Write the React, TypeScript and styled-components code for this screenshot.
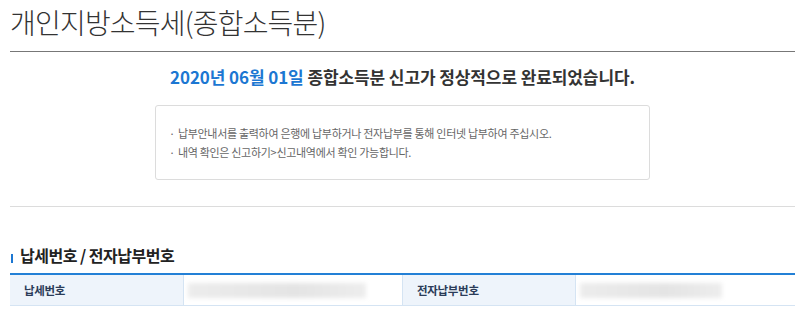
import React from "react";
import styled, { createGlobalStyle } from "styled-components";

const GlobalStyle = createGlobalStyle`
  html, body {
    margin: 0;
    padding: 0;
    background: #fff;
  }
  body {
    font-family: "Noto Sans CJK KR", "Noto Sans", sans-serif;
    color: #333;
  }
`;

const notices = [
  "납부안내서를 출력하여 은행에 납부하거나 전자납부를 통해 인터넷 납부하여 주십시오.",
  "내역 확인은 신고하기>신고내역에서 확인 가능합니다.",
];

const rows = [
  { label: "납세번호", width: 178 },
  { label: "전자납부번호", width: 142 },
];

export default function App() {
  return (
    <>
      <GlobalStyle />
      <Page>
        <PageTitle>개인지방소득세(종합소득분)</PageTitle>
        <Message>
          <Accent>2020년 06월 01일</Accent> 종합소득분 신고가 정상적으로
          완료되었습니다.
        </Message>
        <NoticeBox>
          {notices.map((text, index) => (
            <NoticeItem key={index}>{text}</NoticeItem>
          ))}
        </NoticeBox>
        <Divider />
        <SectionTitle>납세번호 / 전자납부번호</SectionTitle>
        <Table>
          <tbody>
            <tr>
              {rows.map((row) => (
                <React.Fragment key={row.label}>
                  <Th>{row.label}</Th>
                  <Td>
                    <Masked $width={row.width} />
                  </Td>
                </React.Fragment>
              ))}
            </tr>
          </tbody>
        </Table>
      </Page>
    </>
  );
}

const Page = styled.div`
  width: 785px;
  padding: 0 5px 0 10px;
`;

const PageTitle = styled.h1`
  margin: 0;
  height: 51px;
  line-height: 44px;
  font-size: 28px;
  font-weight: 300;
  letter-spacing: -0.8px;
  color: #333;
  border-bottom: 1px solid #777;
`;

const Message = styled.p`
  margin: 14px 0 0;
  line-height: 22px;
  text-align: center;
  font-size: 17px;
  font-weight: 700;
  letter-spacing: -0.1px;
  color: #333;
`;

const Accent = styled.span`
  color: #1c77d2;
`;

const NoticeBox = styled.ul`
  list-style: none;
  box-sizing: border-box;
  width: 495px;
  margin: 17px auto 0;
  padding: 18px 13px 17px;
  border: 1px solid #dcdcdc;
  border-radius: 3px;
`;

const NoticeItem = styled.li`
  line-height: 19px;
  font-size: 11px;
  letter-spacing: -0.3px;
  color: #666;

  &::before {
    content: "·";
    margin-right: 3px;
  }
`;

const Divider = styled.hr`
  margin: 26px 0 0;
  border: 0;
  border-top: 1px solid #dcdcdc;
`;

const SectionTitle = styled.h2`
  position: relative;
  margin: 38px 0 0;
  padding-left: 10px;
  line-height: 20px;
  font-size: 16px;
  font-weight: 700;
  letter-spacing: -0.5px;
  color: #222;

  &::before {
    content: "";
    position: absolute;
    left: 1px;
    bottom: 2px;
    width: 2px;
    height: 9px;
    background: #1c77d2;
  }
`;

const Table = styled.table`
  width: 100%;
  margin-top: 8px;
  border-collapse: collapse;
  border-top: 2px solid #2380d6;
  table-layout: fixed;
`;

const Th = styled.th`
  width: 173px;
  height: 30px;
  padding: 0 0 0 14px;
  box-sizing: border-box;
  text-align: left;
  font-size: 11.5px;
  font-weight: 700;
  letter-spacing: -0.3px;
  color: #2b3c59;
  background: #eef4fb;
  border-bottom: 1px solid #d5e4f3;
  border-right: 1px solid #d5e4f3;
`;

const Td = styled.td`
  height: 30px;
  padding: 0 0 0 4px;
  border-bottom: 1px solid #d5e4f3;
  border-right: 1px solid #d5e4f3;

  &:last-child {
    border-right: 0;
  }
`;

const Masked = styled.span<{ $width: number }>`
  display: block;
  width: ${({ $width }) => $width}px;
  height: 15px;
  background: linear-gradient(90deg, #ececec, #e4e4e4 60%, #ededed);
  filter: blur(2px);
`;
